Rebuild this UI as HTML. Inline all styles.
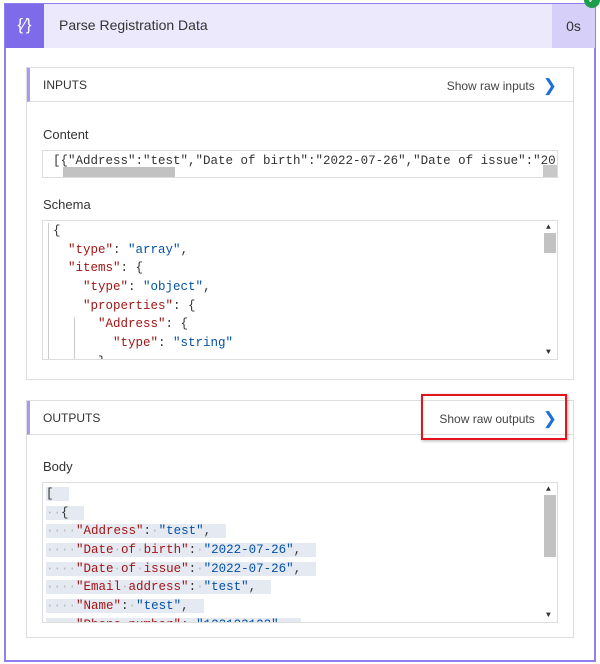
<!DOCTYPE html>
<html><head><style>
*{box-sizing:border-box;margin:0;padding:0}
body{width:600px;height:664px;background:#fff;font-family:"Liberation Sans",sans-serif;position:relative;overflow:hidden;color:#333}
.abs{position:absolute}
.card{left:4px;top:3px;width:592px;height:659px;border:2px solid #8f80f2;background:#fff}
.hdr{left:5px;top:4px;width:590px;height:44px;background:#ede9fc}
.ico{left:5px;top:4px;width:39px;height:44px;background:#7e6bea;color:#fff;font-size:17px;text-align:center;line-height:42px}
.zs{left:552px;top:4px;width:43px;height:44px;background:#d6cff8;font-size:14px;text-align:center;line-height:44px;color:#333}
.title{left:59px;top:17px;font-size:14px;color:#333}
.panel{border:1px solid #ddd;background:#fff}
.ph{height:34px;border-bottom:1px solid #ddd;border-left:3px solid #a89af2;font-size:12px;line-height:34px;padding-left:13px;color:#333}
.raw{position:absolute;right:16px;top:0;font-size:12px;color:#444;line-height:34px}
.raw b{color:#1e6fd9;font-weight:normal;font-size:17px;margin-left:8px;position:relative;top:1px}
.lbl{font-size:13px;color:#333}
.box{border:1px solid #ddd;background:#fff;overflow:hidden;font-family:"Liberation Mono",monospace;font-size:12.5px}
.k{color:#a31515}.s{color:#0451a5}
.sb{position:absolute;right:0;top:0;width:14px;height:100%;background:#fff}
.ln{height:18.7px;white-space:pre;line-height:18.7px}
.hl{background:#e4e9f2}
.dot{color:#bbb}
</style></head><body>
<div class="abs card"></div>
<div class="abs hdr"></div>
<div class="abs ico">{&#8725;}</div>
<div class="abs zs">0s</div>
<div class="abs title">Parse Registration Data</div>
<div class="abs" style="left:584px;top:-8px;width:16px;height:16px;border-radius:50%;background:#1e9e4a;color:#fff;font-size:10px;text-align:center;line-height:18px">✓</div>

<div class="abs panel" style="left:26px;top:67px;width:548px;height:313px">
 <div class="ph">INPUTS<span class="raw">Show raw inputs<b>&#10095;</b></span></div>
</div>
<div class="abs lbl" style="left:43px;top:127px">Content</div>
<div class="abs box" style="left:42px;top:150px;width:516px;height:28px">
 <div style="position:absolute;left:10px;top:1px;white-space:pre;line-height:18px">[{<span>"Address":"test","Date of birth":"2022-07-26","Date of issue":"20</span></div>
 <div style="position:absolute;left:20px;top:16px;width:112px;height:10px;background:#c2c2c2"></div>
 <div style="position:absolute;right:0;top:14px;width:14px;height:13px;background:#c8c8c8"></div>
</div>
<div class="abs lbl" style="left:43px;top:197px">Schema</div>
<div class="abs box" style="left:42px;top:220px;width:516px;height:140px">
 <div style="position:absolute;left:10px;top:1px">
 <div class="ln">{</div>
 <div class="ln">  <span class="k">"type"</span>: <span class="s">"array"</span>,</div>
 <div class="ln">  <span class="k">"items"</span>: {</div>
 <div class="ln">    <span class="k">"type"</span>: <span class="s">"object"</span>,</div>
 <div class="ln">    <span class="k">"properties"</span>: {</div>
 <div class="ln">      <span class="k">"Address"</span>: {</div>
 <div class="ln">        <span class="k">"type"</span>: <span class="s">"string"</span></div>
 <div class="ln">      }</div>
 </div>
 <div style="position:absolute;left:5px;top:2px;width:1px;height:138px;background:#ccc"></div>
 <div style="position:absolute;left:31px;top:96px;width:1px;height:44px;background:#ccc"></div>
 <div class="sb"><div style="position:absolute;left:1px;top:12px;width:12px;height:20px;background:#c2c2c2"></div><div style="position:absolute;left:3px;top:2px;font-size:8px">▲</div><div style="position:absolute;left:3px;bottom:2px;font-size:8px">▼</div></div>
</div>

<div class="abs panel" style="left:26px;top:400px;width:548px;height:238px">
 <div class="ph">OUTPUTS<span class="raw">Show raw outputs<b>&#10095;</b></span></div>
</div>
<div class="abs" style="left:421px;top:394px;width:146px;height:46px;border:2px solid #e3141b;box-shadow:1px 1px 3px rgba(0,0,0,.3)"></div>
<div class="abs lbl" style="left:43px;top:459px">Body</div>
<div class="abs box" style="left:42px;top:482px;width:516px;height:141px">
 <div style="position:absolute;left:3px;top:2px">
 <div class="ln"><span class="hl">[  </span></div>
 <div class="ln"><span class="hl"><span class="dot">··</span>{  </span></div>
 <div class="ln"><span class="hl"><span class="dot">····</span><span class="k">"Address"</span>:<span class="dot">·</span><span class="s">"test"</span>,  </span></div>
 <div class="ln"><span class="hl"><span class="dot">····</span><span class="k">"Date<span class="dot">·</span>of<span class="dot">·</span>birth"</span>:<span class="dot">·</span><span class="s">"2022-07-26"</span>,  </span></div>
 <div class="ln"><span class="hl"><span class="dot">····</span><span class="k">"Date<span class="dot">·</span>of<span class="dot">·</span>issue"</span>:<span class="dot">·</span><span class="s">"2022-07-26"</span>,  </span></div>
 <div class="ln"><span class="hl"><span class="dot">····</span><span class="k">"Email<span class="dot">·</span>address"</span>:<span class="dot">·</span><span class="s">"test"</span>,  </span></div>
 <div class="ln"><span class="hl"><span class="dot">····</span><span class="k">"Name"</span>:<span class="dot">·</span><span class="s">"test"</span>,  </span></div>
 <div class="ln"><span class="hl"><span class="dot">····</span><span class="k">"Phone<span class="dot">·</span>number"</span>:<span class="dot">·</span><span class="s">"123123123"</span>,  </span></div>
 </div>
 <div class="sb"><div style="position:absolute;left:1px;top:12px;width:12px;height:62px;background:#c2c2c2"></div><div style="position:absolute;left:3px;top:2px;font-size:8px">▲</div><div style="position:absolute;left:3px;bottom:2px;font-size:8px">▼</div></div>
</div>
</body></html>
